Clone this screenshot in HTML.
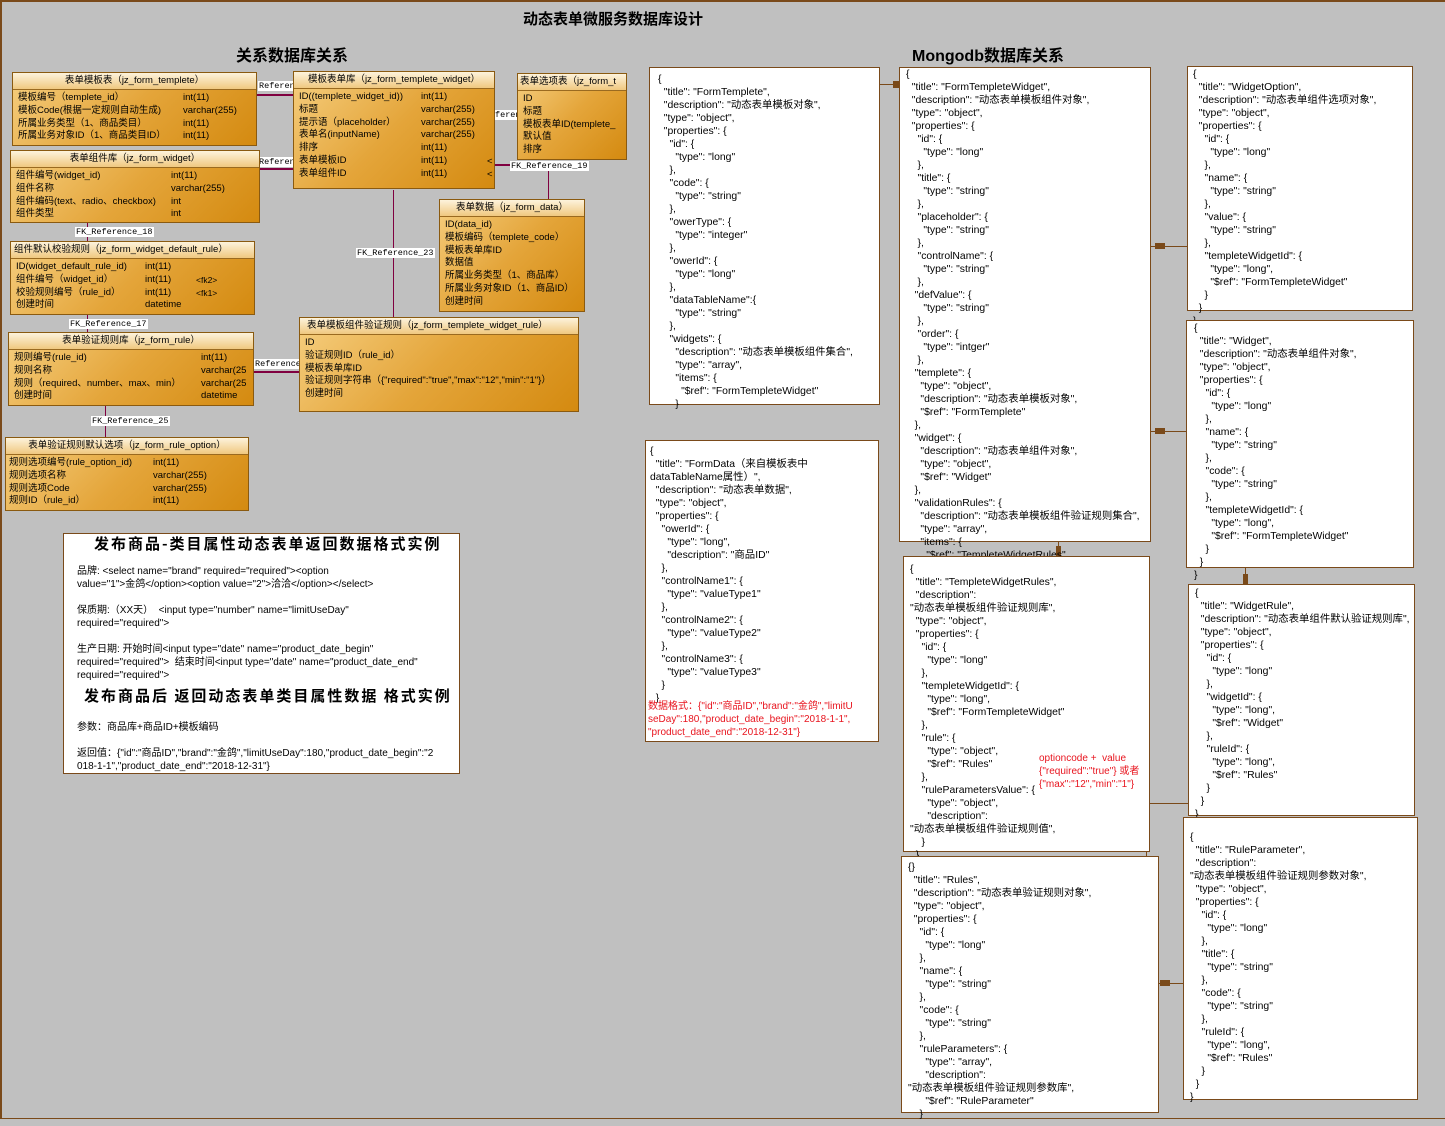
<!DOCTYPE html>
<html><head><meta charset="utf-8">
<style>
*{margin:0;padding:0;box-sizing:border-box}
body{width:1445px;height:1126px;background:#c0c0c0;position:relative;overflow:hidden;font-family:"Liberation Sans","Noto Sans CJK SC",sans-serif;color:#000}
.frame{position:absolute;left:0;top:0;width:1445px;height:1119px;border-top:2px solid #7a4a1a;border-left:2px solid #7a4a1a;border-bottom:1px solid #7a4a1a}
.h{position:absolute;font-weight:bold;white-space:nowrap;font-family:"Noto Sans CJK SC","WenQuanYi Zen Hei",sans-serif}
.t{position:absolute;border:1px solid #8a5a10;background:linear-gradient(135deg,#f6cf80 0%,#e4a53a 50%,#d48a10 100%);font-size:9.5px;line-height:12.8px;white-space:nowrap;overflow:hidden}
.t .hd{height:17px;border-bottom:1px solid #9a6a20;background:linear-gradient(180deg,#fdf3dc,#f0c880);text-align:center;line-height:16px}
.t .bd{padding:2px 0 0 5px;position:relative}
.t .c2{position:absolute}
.j{position:absolute;background:#fff;border:1px solid #7a4a1a;font-size:10.4px;line-height:13px;white-space:pre;padding:0 0 0 8px}
.l{position:absolute;background:#800040}
.b{position:absolute;background:#7a4a1a}
.lab{position:absolute;background:#fff;font-family:"Liberation Mono",monospace;font-size:8.5px;line-height:10px;padding:0 1px;white-space:nowrap}
.red{color:#e8141e}
</style></head><body>
<div class="frame"></div>
<div class="h" style="left:523px;top:8px;font-size:15px">动态表单微服务数据库设计</div>
<div class="h" style="left:236px;top:42px;font-size:16px">关系数据库关系</div>
<div class="h" style="left:912px;top:42px;font-size:16px;font-family:'Liberation Sans','Noto Sans CJK SC',sans-serif">Mongodb数据库关系</div>

<div class="l" style="left:256px;top:94px;width:38px;height:2px"></div>
<div class="l" style="left:259px;top:168px;width:35px;height:2px"></div>
<div class="l" style="left:494px;top:113px;width:23px;height:2px"></div>
<div class="l" style="left:494px;top:164px;width:55px;height:2px"></div>
<div class="l" style="left:548px;top:164px;width:1px;height:36px"></div>
<div class="l" style="left:393px;top:190px;width:1px;height:128px"></div>
<div class="l" style="left:87px;top:222px;width:1px;height:20px"></div>
<div class="l" style="left:87px;top:314px;width:1px;height:18px"></div>
<div class="l" style="left:105px;top:405px;width:1px;height:33px"></div>
<div class="l" style="left:253px;top:371px;width:46px;height:2px"></div>
<div class="lab" style="left:258px;top:81px">Reference</div>
<div class="lab" style="left:258px;top:157px">Reference</div>
<div class="lab" style="left:494px;top:110px">feren</div>
<div class="lab" style="left:510px;top:161px">FK_Reference_19</div>
<div class="lab" style="left:75px;top:227px">FK_Reference_18</div>
<div class="lab" style="left:356px;top:248px">FK_Reference_23</div>
<div class="lab" style="left:69px;top:319px">FK_Reference_17</div>
<div class="lab" style="left:254px;top:359px">Reference</div>
<div class="lab" style="left:91px;top:416px">FK_Reference_25</div>

<div class="t" style="left:12px;top:72px;width:245px;height:74px"><div class="hd">表单模板表（jz_form_templete）</div><div class="bd">模板编号（templete_id）<br>模板Code(根据一定规则自动生成)<br>所属业务类型（1、商品类目）<br>所属业务对象ID（1、商品类目ID）<div class="c2" style="left:170px;top:2px">int(11)<br>varchar(255)<br>int(11)<br>int(11)</div></div></div>

<div class="t" style="left:293px;top:71px;width:202px;height:118px"><div class="hd">模板表单库（jz_form_templete_widget）</div><div class="bd">ID((templete_widget_id))<br>标题<br>提示语（placeholder）<br>表单名(inputName)<br>排序<br>表单模板ID<br>表单组件ID<div class="c2" style="left:127px;top:2px">int(11)<br>varchar(255)<br>varchar(255)<br>varchar(255)<br>int(11)<br>int(11)<br>int(11)</div><div class="c2" style="left:193px;top:67px">&lt;<br>&lt;</div></div></div>

<div class="t" style="left:517px;top:73px;width:110px;height:87px"><div class="hd" style="text-align:left;padding-left:2px">表单选项表（jz_form_t</div><div class="bd">ID<br>标题<br>模板表单ID(templete_<br>默认值<br>排序</div></div>

<div class="t" style="left:10px;top:150px;width:250px;height:73px"><div class="hd">表单组件库（jz_form_widget）</div><div class="bd">组件编号(widget_id)<br>组件名称<br>组件编码(text、radio、checkbox)<br>组件类型<div class="c2" style="left:160px;top:2px">int(11)<br>varchar(255)<br>int<br>int</div></div></div>

<div class="t" style="left:439px;top:199px;width:146px;height:113px"><div class="hd">表单数据（jz_form_data）</div><div class="bd">ID(data_id)<br>模板编码（templete_code）<br>模板表单库ID<br>数据值<br>所属业务类型（1、商品库）<br>所属业务对象ID（1、商品ID）<br>创建时间</div></div>

<div class="t" style="left:10px;top:241px;width:245px;height:74px"><div class="hd" style="text-align:left;padding-left:3px">组件默认校验规则（jz_form_widget_default_rule）</div><div class="bd">ID(widget_default_rule_id)<br>组件编号（widget_id）<br>校验规则编号（rule_id）<br>创建时间<div class="c2" style="left:134px;top:2px">int(11)<br>int(11)<br>int(11)<br>datetime</div><div class="c2" style="left:185px;top:15px;font-size:8.5px">&lt;fk2&gt;<br>&lt;fk1&gt;</div></div></div>

<div class="t" style="left:8px;top:332px;width:246px;height:74px"><div class="hd">表单验证规则库（jz_form_rule）</div><div class="bd">规则编号(rule_id)<br>规则名称<br>规则（required、number、max、min）<br>创建时间<div class="c2" style="left:192px;top:2px">int(11)<br>varchar(25<br>varchar(25<br>datetime</div></div></div>

<div class="t" style="left:299px;top:317px;width:280px;height:95px"><div class="hd" style="text-align:left;padding-left:7px">表单模板组件验证规则（jz_form_templete_widget_rule）</div><div class="bd">ID<br>验证规则ID（rule_id）<br>模板表单库ID<br>验证规则字符串（{"required":"true","max":"12","min":"1"}）<br>创建时间</div></div>

<div class="t" style="left:5px;top:437px;width:244px;height:74px"><div class="hd">表单验证规则默认选项（jz_form_rule_option）</div><div class="bd" style="padding-left:3px">规则选项编号(rule_option_id)<br>规则选项名称<br>规则选项Code<br>规则ID（rule_id）<div class="c2" style="left:147px;top:2px">int(11)<br>varchar(255)<br>varchar(255)<br>int(11)</div></div></div>

<div style="position:absolute;left:63px;top:533px;width:397px;height:241px;background:#fff;border:1px solid #7a4a1a;font-size:10px;line-height:13px;white-space:nowrap;overflow:hidden">
<div class="h" style="position:absolute;left:30px;top:3px;font-size:15px;letter-spacing:2px">发布商品-类目属性动态表单返回数据格式实例</div>
<div style="position:absolute;left:13px;top:31px">品牌: &lt;select name="brand" required="required"&gt;&lt;option<br>value="1"&gt;金鸽&lt;/option&gt;&lt;option value="2"&gt;洽洽&lt;/option&gt;&lt;/select&gt;<br><br>保质期:（XX天） &nbsp;&lt;input type="number" name="limitUseDay"<br>required="required"&gt;<br><br>生产日期: 开始时间&lt;input type="date" name="product_date_begin"<br>required="required"&gt;&nbsp; 结束时间&lt;input type="date" name="product_date_end"<br>required="required"&gt;</div>
<div class="h" style="position:absolute;left:20px;top:155px;font-size:15px;letter-spacing:2px">发布商品后 返回动态表单类目属性数据 格式实例</div>
<div style="position:absolute;left:13px;top:187px">参数：商品库+商品ID+模板编码<br><br>返回值：{"id":"商品ID","brand":"金鸽","limitUseDay":180,"product_date_begin":"2<br>018-1-1","product_date_end":"2018-12-31"}</div>
</div>

<div class="b" style="left:879px;top:84px;width:1px;height:246px"></div>
<div class="b" style="left:879px;top:84px;width:20px;height:1px"></div>
<div class="b" style="left:893px;top:81px;width:6px;height:7px"></div>
<div class="b" style="left:1150px;top:246px;width:37px;height:1px"></div>
<div class="b" style="left:1155px;top:243px;width:10px;height:6px"></div>
<div class="b" style="left:1150px;top:431px;width:36px;height:1px"></div>
<div class="b" style="left:1155px;top:428px;width:10px;height:6px"></div>
<div class="b" style="left:1245px;top:567px;width:1px;height:17px"></div>
<div class="b" style="left:1243px;top:574px;width:5px;height:10px"></div>
<div class="b" style="left:1150px;top:803px;width:38px;height:1px"></div>
<div class="b" style="left:1058px;top:541px;width:1px;height:15px"></div>
<div class="b" style="left:1056px;top:546px;width:5px;height:10px"></div>
<div class="b" style="left:1158px;top:983px;width:25px;height:1px"></div>
<div class="b" style="left:1160px;top:980px;width:10px;height:6px"></div>
<div class="b" style="left:1146px;top:851px;width:1px;height:5px"></div>

<div class="j" style="left:649px;top:67px;width:231px;height:338px;padding-top:5px">{
  "title": "FormTemplete",
  "description": "动态表单模板对象",
  "type": "object",
  "properties": {
    "id": {
      "type": "long"
    },
    "code": {
      "type": "string"
    },
    "owerType": {
      "type": "integer"
    },
    "owerId": {
      "type": "long"
    },
    "dataTableName":{
      "type": "string"
    },
    "widgets": {
      "description": "动态表单模板组件集合",
      "type": "array",
      "items": {
        "$ref": "FormTempleteWidget"
      }</div>

<div class="j" style="left:899px;top:67px;width:252px;height:475px;padding-top:0;padding-left:6px">{
  "title": "FormTempleteWidget",
  "description": "动态表单模板组件对象",
  "type": "object",
  "properties": {
    "id": {
      "type": "long"
    },
    "title": {
      "type": "string"
    },
    "placeholder": {
      "type": "string"
    },
    "controlName": {
      "type": "string"
    },
   "defValue": {
      "type": "string"
    },
    "order": {
      "type": "intger"
    },
   "templete": {
     "type": "object",
     "description": "动态表单模板对象",
     "$ref": "FormTemplete"
   },
   "widget": {
     "description": "动态表单组件对象",
     "type": "object",
     "$ref": "Widget"
   },
   "validationRules": {
     "description": "动态表单模板组件验证规则集合",
     "type": "array",
     "items": {
       "$ref": "TempleteWidgetRules"</div>

<div class="j" style="left:1187px;top:66px;width:226px;height:245px;padding-top:1px;padding-left:5px">{
  "title": "WidgetOption",
  "description": "动态表单组件选项对象",
  "type": "object",
  "properties": {
    "id": {
      "type": "long"
    },
    "name": {
      "type": "string"
    },
    "value": {
      "type": "string"
    },
    "templeteWidgetId": {
      "type": "long",
      "$ref": "FormTempleteWidget"
    }
  }
}</div>

<div class="j" style="left:1186px;top:320px;width:228px;height:248px;padding-top:1px;padding-left:7px">{
  "title": "Widget",
  "description": "动态表单组件对象",
  "type": "object",
  "properties": {
    "id": {
      "type": "long"
    },
    "name": {
      "type": "string"
    },
    "code": {
      "type": "string"
    },
    "templeteWidgetId": {
      "type": "long",
      "$ref": "FormTempleteWidget"
    }
  }
}</div>

<div class="j" style="left:1188px;top:584px;width:227px;height:232px;padding-top:2px;padding-left:6px">{
  "title": "WidgetRule",
  "description": "动态表单组件默认验证规则库",
  "type": "object",
  "properties": {
    "id": {
      "type": "long"
    },
    "widgetId": {
      "type": "long",
      "$ref": "Widget"
    },
    "ruleId": {
      "type": "long",
      "$ref": "Rules"
    }
  }
}</div>

<div class="j" style="left:645px;top:440px;width:234px;height:302px;padding-top:4px;padding-left:4px">{
  "title": "FormData（来自模板表中
dataTableName属性）",
  "description": "动态表单数据",
  "type": "object",
  "properties": {
    "owerId": {
      "type": "long",
      "description": "商品ID"
    },
    "controlName1": {
      "type": "valueType1"
    },
    "controlName2": {
      "type": "valueType2"
    },
    "controlName3": {
      "type": "valueType3"
    }
  }</div>
<div class="red" style="position:absolute;left:648px;top:700px;font-size:10px;line-height:13px;white-space:nowrap">数据格式：{"id":"商品ID","brand":"金鸽","limitU<br>seDay":180,"product_date_begin":"2018-1-1",<br>"product_date_end":"2018-12-31"}</div>

<div class="j" style="left:903px;top:556px;width:247px;height:296px;padding-top:6px;padding-left:6px">{
  "title": "TempleteWidgetRules",
  "description":
"动态表单模板组件验证规则库",
  "type": "object",
  "properties": {
    "id": {
      "type": "long"
    },
    "templeteWidgetId": {
      "type": "long",
      "$ref": "FormTempleteWidget"
    },
    "rule": {
      "type": "object",
      "$ref": "Rules"
    },
    "ruleParametersValue": {
      "type": "object",
      "description":
"动态表单模板组件验证规则值",
    }
  }</div>
<div class="red" style="position:absolute;left:1039px;top:752px;font-size:10px;line-height:13px;white-space:pre">optioncode +  value
{"required":"true"} 或者
{"max":"12","min":"1"}</div>

<div class="j" style="left:901px;top:856px;width:258px;height:257px;padding-top:4px;padding-left:6px">{}
  "title": "Rules",
  "description": "动态表单验证规则对象",
  "type": "object",
  "properties": {
    "id": {
      "type": "long"
    },
    "name": {
      "type": "string"
    },
    "code": {
      "type": "string"
    },
    "ruleParameters": {
      "type": "array",
      "description":
"动态表单模板组件验证规则参数库",
      "$ref": "RuleParameter"
    }</div>

<div class="j" style="left:1183px;top:817px;width:235px;height:283px;padding-top:13px;padding-left:6px">{
  "title": "RuleParameter",
  "description":
"动态表单模板组件验证规则参数对象",
  "type": "object",
  "properties": {
    "id": {
      "type": "long"
    },
    "title": {
      "type": "string"
    },
    "code": {
      "type": "string"
    },
    "ruleId": {
      "type": "long",
      "$ref": "Rules"
    }
  }
}</div>
</body></html>
